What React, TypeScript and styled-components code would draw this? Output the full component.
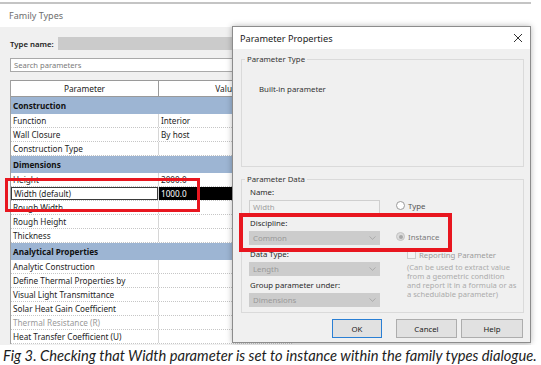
import React from "react";
import styled, { createGlobalStyle } from "styled-components";

const UI = `"Noto Sans", "Open Sans", sans-serif`;

const GlobalStyle = createGlobalStyle`
  html, body { margin: 0; padding: 0; background: #ffffff; }
  body { width: 541px; height: 365px; overflow: hidden; font-family: ${UI}; color: #1e1e1e; }
  * { box-sizing: border-box; }
`;

const Page = styled.div`
  width: 541px;
  height: 365px;
  display: flex;
  flex-direction: column;
  background: #fff;
`;

const Shot = styled.div`
  position: relative;
  width: 541px;
  height: 345px;
  overflow: hidden;
  flex: none;
`;

/* ---------- Family Types window ---------- */
const FamilyWindow = styled.div`
  width: 531px;
  height: 100%;
  display: flex;
  flex-direction: column;
  margin-top: 2px;
  border-top: 2px solid #c4c4c4;
`;

const FamilyTitle = styled.div`
  height: 23px;
  flex: none;
  display: flex;
  align-items: center;
  padding-left: 9px;
  font-size: 9px;
  color: #6e6e6e;
  background: #fff;
`;

const FamilyBody = styled.div`
  flex: 1;
  background: #f0f0f0;
  padding: 10px 0 0 10px;
  display: flex;
  flex-direction: column;
`;

const TypeNameRow = styled.div`
  display: flex;
  align-items: center;
  height: 13px;
`;

const TypeLabel = styled.span`
  width: 48px;
  font-size: 7.8px;
  font-weight: 600;
  color: #222;
`;

const TypeInput = styled.div`
  flex: 1;
  height: 13px;
  background: #cbcbcb;
`;

const SearchBox = styled.div`
  margin-top: 8px;
  height: 14px;
  border: 1px solid #a9a9a9;
  background: #fff;
  font-size: 7.6px;
  color: #7a7a7a;
  display: flex;
  align-items: center;
  padding-left: 3px;
`;

const Table = styled.div`
  margin-top: 8px;
  width: 282px;
  border-left: 1px solid #a0a0a0;
  display: flex;
  flex-direction: column;
`;

const HeaderRow = styled.div`
  display: grid;
  grid-template-columns: 147px 135px;
  height: 17px;
  background: #fff;
  border-top: 1px solid #9a9a9a;
  border-bottom: 1px solid #9a9a9a;
`;

const HeaderCell = styled.div`
  display: flex;
  align-items: center;
  justify-content: center;
  font-size: 8.3px;
  color: #222;
  & + & {
    border-left: 1px solid #9a9a9a;
  }
`;

const SectionRow = styled.div`
  height: 17px;
  background: #9db5d3;
  display: flex;
  align-items: center;
  padding-left: 2px;
  font-weight: 700;
  font-size: 8.2px;
  color: #111;
`;

const DataRow = styled.div`
  display: grid;
  grid-template-columns: 147px 135px;
  height: 14px;
  background: #fff;
  border-bottom: 1px dotted #c6c6c6;
`;

const Cell = styled.div<{ $dim?: boolean; $focus?: boolean; $selected?: boolean }>`
  display: flex;
  align-items: center;
  padding-left: 2px;
  font-size: 8.2px;
  white-space: nowrap;
  overflow: hidden;
  color: ${(p) => (p.$selected ? "#fff" : p.$dim ? "#9a9a9a" : "#1e1e1e")};
  background: ${(p) => (p.$selected ? "#000" : "#fff")};
  border: ${(p) => (p.$focus ? "1px solid #3a3a3a" : "none")};
  & + & {
    border-left: 1px solid #d6d6d6;
  }
`;

/* ---------- Parameter Properties dialog ---------- */
const Dialog = styled.div`
  position: absolute;
  left: 232px;
  top: 26px;
  width: 299px;
  height: 317px;
  background: #f0f0f0;
  border: 1px solid #8c8c8c;
  box-shadow: 0 0 6px rgba(0, 0, 0, 0.28);
  display: flex;
  flex-direction: column;
`;

const DialogTitleBar = styled.div`
  height: 22px;
  flex: none;
  background: #fff;
  display: flex;
  align-items: center;
  justify-content: space-between;
  padding: 0 7px 0 7px;
  font-size: 9.2px;
  color: #1a1a1a;
`;

const DialogBody = styled.div`
  flex: 1;
  padding: 5px 6px 0 8px;
  display: flex;
  flex-direction: column;
`;

const Group = styled.fieldset<{ $h: number; $mt?: number }>`
  margin: ${(p) => p.$mt ?? 0}px 0 0 0;
  padding: 0;
  border: 1px solid #dadada;
  height: ${(p) => p.$h}px;
  min-width: 0;
`;

const GroupLegend = styled.legend`
  margin-left: 3px;
  padding: 0 2px;
  font-size: 7.8px;
  line-height: 10px;
  color: #333;
`;

const GroupContent = styled.div<{ $pt: number; $pl: number }>`
  padding: ${(p) => p.$pt}px 0 0 ${(p) => p.$pl}px;
`;

const PlainText = styled.div`
  font-size: 7.8px;
  line-height: 11px;
  color: #333;
`;

const DataGrid = styled.div`
  display: grid;
  grid-template-columns: 131px 1fr;
  column-gap: 16px;
`;

const LeftCol = styled.div`
  display: flex;
  flex-direction: column;
  gap: 4px;
`;

const FieldBlock = styled.div`
  display: flex;
  flex-direction: column;
  gap: 2px;
`;

const FieldLabel = styled.div`
  font-size: 7.8px;
  line-height: 11px;
  color: #2a2a2a;
  padding-left: 1px;
`;

const TextField = styled.div`
  height: 14px;
  border: 1px solid #cfcfcf;
  background: #f2f2f2;
  font-size: 7.8px;
  color: #a0a0a0;
  display: flex;
  align-items: center;
  padding-left: 3px;
`;

const SelectField = styled.div`
  height: 14px;
  background: #cccccc;
  font-size: 7.8px;
  color: #999;
  display: flex;
  align-items: center;
  justify-content: space-between;
  padding: 0 4px 0 4px;
`;

const RightCol = styled.div`
  display: flex;
  flex-direction: column;
`;

const OptionRow = styled.div<{ $mt: number; $indent?: number }>`
  margin-top: ${(p) => p.$mt}px;
  margin-left: ${(p) => p.$indent ?? 0}px;
  height: 11px;
  display: flex;
  align-items: center;
  gap: 3px;
  font-size: 7.8px;
`;

const Radio = styled.span<{ $checked?: boolean; $disabled?: boolean }>`
  width: 9px;
  height: 9px;
  border-radius: 50%;
  border: 1px solid ${(p) => (p.$disabled ? "#c4c4c4" : "#9a9a9a")};
  background: ${(p) => (p.$disabled ? "#dcdcdc" : "#fff")};
  display: flex;
  align-items: center;
  justify-content: center;
  flex: none;
  &::after {
    content: "";
    width: 4px;
    height: 4px;
    border-radius: 50%;
    background: ${(p) => (p.$checked ? "#a8a8a8" : "transparent")};
  }
`;

const OptionText = styled.span<{ $tone: string }>`
  color: ${(p) => p.$tone};
`;

const CheckBox = styled.span`
  width: 9px;
  height: 9px;
  border: 1px solid #cdcdcd;
  background: #f4f4f4;
  flex: none;
`;

const HelpText = styled.div`
  margin-top: 3px;
  margin-left: 11px;
  font-size: 7.6px;
  line-height: 9px;
  color: #ababab;
`;

const ButtonRow = styled.div`
  margin-top: 6px;
  display: flex;
  justify-content: flex-end;
  gap: 4px;
  padding-right: 1px;
`;

const Button = styled.div<{ $w: number; $primary?: boolean }>`
  width: ${(p) => p.$w}px;
  height: 19px;
  margin-right: ${(p) => (p.$primary ? 10 : 0)}px;
  background: #e1e1e1;
  border: 1px solid ${(p) => (p.$primary ? "#2a7fd4" : "#adadad")};
  font-size: 7.8px;
  color: #222;
  display: flex;
  align-items: center;
  justify-content: center;
`;

/* ---------- annotations ---------- */
const Highlight = styled.div<{ $l: number; $t: number; $w: number; $h: number; $b: number }>`
  position: absolute;
  left: ${(p) => p.$l}px;
  top: ${(p) => p.$t}px;
  width: ${(p) => p.$w}px;
  height: ${(p) => p.$h}px;
  border: ${(p) => p.$b}px solid #e8161f;
  pointer-events: none;
`;

const Caption = styled.div`
  flex: 1;
  display: flex;
  align-items: center;
  padding-left: 3px;
  font-family: Lato, "Open Sans", sans-serif;
  font-style: italic;
  font-size: 14.7px;
  color: #1c1c1c;
  white-space: nowrap;
`;

const Chevron = () => (
  <svg width="7" height="4" viewBox="0 0 7 4">
    <path d="M0.5 0.5 L3.5 3.3 L6.5 0.5" fill="none" stroke="#a6a6a6" strokeWidth="0.9" />
  </svg>
);

const CloseIcon = () => (
  <svg width="10" height="10" viewBox="0 0 10 10">
    <path d="M1 1 L9 9 M9 1 L1 9" stroke="#333" strokeWidth="1" />
  </svg>
);

type Row = { name: string; value?: string; dim?: boolean; active?: boolean };
type Section = { title: string; rows: Row[] };

const sections: Section[] = [
  {
    title: "Construction",
    rows: [
      { name: "Function", value: "Interior" },
      { name: "Wall Closure", value: "By host" },
      { name: "Construction Type" },
    ],
  },
  {
    title: "Dimensions",
    rows: [
      { name: "Height", value: "2000.0" },
      { name: "Width (default)", value: "1000.0", active: true },
      { name: "Rough Width" },
      { name: "Rough Height" },
      { name: "Thickness" },
    ],
  },
  {
    title: "Analytical Properties",
    rows: [
      { name: "Analytic Construction" },
      { name: "Define Thermal Properties by" },
      { name: "Visual Light Transmittance" },
      { name: "Solar Heat Gain Coefficient" },
      { name: "Thermal Resistance (R)", dim: true },
      { name: "Heat Transfer Coefficient (U)" },
    ],
  },
];

export default function App() {
  return (
    <Page>
      <GlobalStyle />
      <Shot>
        <FamilyWindow>
          <FamilyTitle>Family Types</FamilyTitle>
          <FamilyBody>
            <TypeNameRow>
              <TypeLabel>Type name:</TypeLabel>
              <TypeInput />
            </TypeNameRow>
            <SearchBox>Search parameters</SearchBox>
            <Table>
              <HeaderRow>
                <HeaderCell>Parameter</HeaderCell>
                <HeaderCell>Value</HeaderCell>
              </HeaderRow>
              {sections.map((s) => (
                <React.Fragment key={s.title}>
                  <SectionRow>{s.title}</SectionRow>
                  {s.rows.map((r) => (
                    <DataRow key={r.name}>
                      <Cell $dim={r.dim} $focus={r.active}>
                        {r.name}
                      </Cell>
                      <Cell $selected={r.active}>{r.value ?? ""}</Cell>
                    </DataRow>
                  ))}
                </React.Fragment>
              ))}
            </Table>
          </FamilyBody>
        </FamilyWindow>

        <Dialog>
          <DialogTitleBar>
            <span>Parameter Properties</span>
            <CloseIcon />
          </DialogTitleBar>
          <DialogBody>
            <Group $h={113}>
              <GroupLegend>Parameter Type</GroupLegend>
              <GroupContent $pt={20} $pl={17}>
                <PlainText>Built-in parameter</PlainText>
              </GroupContent>
            </Group>
            <Group $h={139} $mt={7}>
              <GroupLegend>Parameter Data</GroupLegend>
              <GroupContent $pt={3} $pl={7}>
                <DataGrid>
                  <LeftCol>
                    <FieldBlock>
                      <FieldLabel>Name:</FieldLabel>
                      <TextField>Width</TextField>
                    </FieldBlock>
                    <FieldBlock>
                      <FieldLabel>Discipline:</FieldLabel>
                      <SelectField>
                        Common
                        <Chevron />
                      </SelectField>
                    </FieldBlock>
                    <FieldBlock>
                      <FieldLabel>Data Type:</FieldLabel>
                      <SelectField>
                        Length
                        <Chevron />
                      </SelectField>
                    </FieldBlock>
                    <FieldBlock>
                      <FieldLabel>Group parameter under:</FieldLabel>
                      <SelectField>
                        Dimensions
                        <Chevron />
                      </SelectField>
                    </FieldBlock>
                  </LeftCol>
                  <RightCol>
                    <OptionRow $mt={13}>
                      <Radio />
                      <OptionText $tone="#555">Type</OptionText>
                    </OptionRow>
                    <OptionRow $mt={20}>
                      <Radio $checked $disabled />
                      <OptionText $tone="#7a7a7a">Instance</OptionText>
                    </OptionRow>
                    <OptionRow $mt={7} $indent={11}>
                      <CheckBox />
                      <OptionText $tone="#9c9c9c">Reporting Parameter</OptionText>
                    </OptionRow>
                    <HelpText>
                      (Can be used to extract value
                      <br />
                      from a geometric condition
                      <br />
                      and report it in a formula or as
                      <br />a schedulable parameter)
                    </HelpText>
                  </RightCol>
                </DataGrid>
              </GroupContent>
            </Group>
            <ButtonRow>
              <Button $w={50} $primary>
                OK
              </Button>
              <Button $w={61}>Cancel</Button>
              <Button $w={62}>Help</Button>
            </ButtonRow>
          </DialogBody>
        </Dialog>

        <Highlight $l={5} $t={178} $w={195} $h={34} $b={3} />
        <Highlight $l={239} $t={213} $w={213} $h={39} $b={4} />
      </Shot>
      <Caption>Fig 3. Checking that Width parameter is set to instance within the family types dialogue.</Caption>
    </Page>
  );
}
